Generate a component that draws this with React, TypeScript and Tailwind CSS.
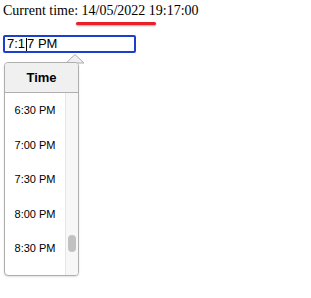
import React from "react"

const times = ["6:30 PM", "7:00 PM", "7:30 PM", "8:00 PM", "8:30 PM"]

export default function App() {
  return (
    <div className="min-h-[298px] w-[311px] bg-white pl-[3px] pt-[2px]">
      <div className="relative font-['Liberation_Serif',serif] text-[14px] leading-[18px] text-black">
        Current time: 14/05/2022 19:17:00
        <div className="absolute left-[73px] top-[20px] h-[3px] w-[80px] rounded-full bg-[#e8202a] shadow-[0_1px_2px_rgba(0,0,0,0.35)]" />
      </div>

      <div className="mt-[15px] flex h-[18px] w-[133px] items-center rounded-[2px] border-2 border-[#1c3fcf] pl-[2px] font-['Liberation_Sans',Arial,sans-serif] text-[13px] text-black">
        <span>7:1</span>
        <span className="mx-[0.5px] inline-block h-[13px] w-px bg-black" />
        <span>7 PM</span>
      </div>

      <div className="relative ml-[1px] mt-[9px] w-[75px]">
        <svg className="absolute -top-[8px] left-[62px]" width="18" height="10" viewBox="0 0 18 10">
          <polygon points="0,9 9,0.5 18,9" fill="#f0f0f0" stroke="#aeaeae" strokeWidth="1" />
        </svg>
        <div className="relative h-[214px] overflow-hidden rounded-[4px] border border-[#aeaeae] bg-white font-['Liberation_Sans',Arial,sans-serif] shadow-[0_1px_2px_rgba(0,0,0,0.12)]">
          <div className="flex h-[30px] items-center justify-center border-b border-[#aeaeae] bg-[#f0f0f0] text-[13px] font-bold text-black">
            Time
          </div>
          <div className="flex h-[182px]">
            <div className="flex-1">
              {times.map((t) => (
                <div key={t} className="flex h-[34.5px] items-center justify-center text-[11px] text-black">
                  {t}
                </div>
              ))}
            </div>
            <div className="relative w-[13px] border-l border-[#e6e6e6] bg-[#f7f7f7]">
              <div className="absolute left-[2px] top-[142px] h-[17px] w-[8px] rounded-full bg-[#c1c1c1]" />
            </div>
          </div>
        </div>
      </div>
    </div>
  )
}
